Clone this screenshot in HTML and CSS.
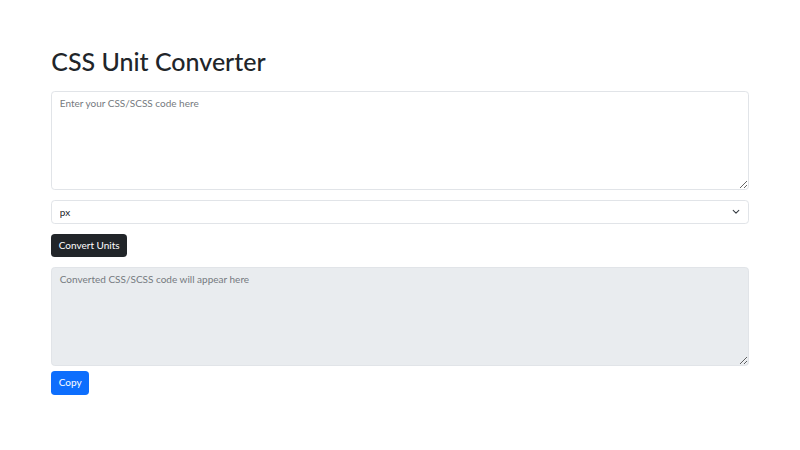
FILE: index.html
```html
<!DOCTYPE html>
<html lang="en">
<head>
<meta charset="utf-8">
<title>CSS Unit Converter</title>
<link rel="stylesheet" href="styles.css">
</head>
<body>
<main class="container">
  <h1 class="title">CSS Unit Converter</h1>
  <textarea class="field input-area" placeholder="Enter your CSS/SCSS code here"></textarea>
  <div class="select-wrap">
    <select class="field unit-select">
      <option>px</option>
      <option>rem</option>
      <option>em</option>
    </select>
    <svg class="chevron" viewBox="0 0 16 16" width="10" height="7.5" aria-hidden="true"><path d="M2 5l6 6 6-6" fill="none" stroke="#343a40" stroke-width="2.2" stroke-linecap="round" stroke-linejoin="round"/></svg>
  </div>
  <button class="btn btn-dark" type="button">Convert Units</button>
  <textarea class="field output-area" placeholder="Converted CSS/SCSS code will appear here" readonly></textarea>
  <button class="btn btn-primary" type="button">Copy</button>
</main>
</body>
</html>
```
FILE: styles.css
```css
* { box-sizing: border-box; }
html, body { margin: 0; padding: 0; background: #fff; }
body {
  font-family: "Lato", "Liberation Sans", sans-serif;
  font-size: 10px;
  line-height: 15px;
  color: #212529;
}
.container {
  width: 712.5px;
  margin: 0 auto;
  padding: 46px 7.5px 0;
  display: flex;
  flex-direction: column;
  align-items: flex-start;
}
.title {
  margin: 0 0 15px;
  font-size: 25px;
  line-height: 30px;
  font-weight: 500;
  color: #212529;
}
.field {
  display: block;
  width: 100%;
  font-family: inherit;
  font-size: 10px;
  line-height: 15px;
  color: #212529;
  background: #fff;
  border: 1px solid #e1e4e8;
  border-radius: 3.75px;
  padding: 3.75px 7.5px;
  margin: 0 0 10px;
}
.field::placeholder { color: #757a80; opacity: 1; }
.input-area, .output-area { height: 98.75px; resize: vertical; }
.output-area { background: #e9ecef; margin-bottom: 5px; }
.select-wrap { position: relative; width: 100%; }
.unit-select {
  height: 23.75px;
  appearance: none;
  -webkit-appearance: none;
  padding-right: 25px;
}
.chevron { position: absolute; right: 7.5px; top: 8px; }
.btn {
  font-family: inherit;
  font-size: 10px;
  line-height: 15px;
  padding: 4.4px 7.5px;
  border: 0;
  border-radius: 3.75px;
  color: #fff;
  margin: 0 0 10px;
  cursor: pointer;
}
.btn-dark { background: #212529; }
.btn-primary { background: #0d6efd; }
```
